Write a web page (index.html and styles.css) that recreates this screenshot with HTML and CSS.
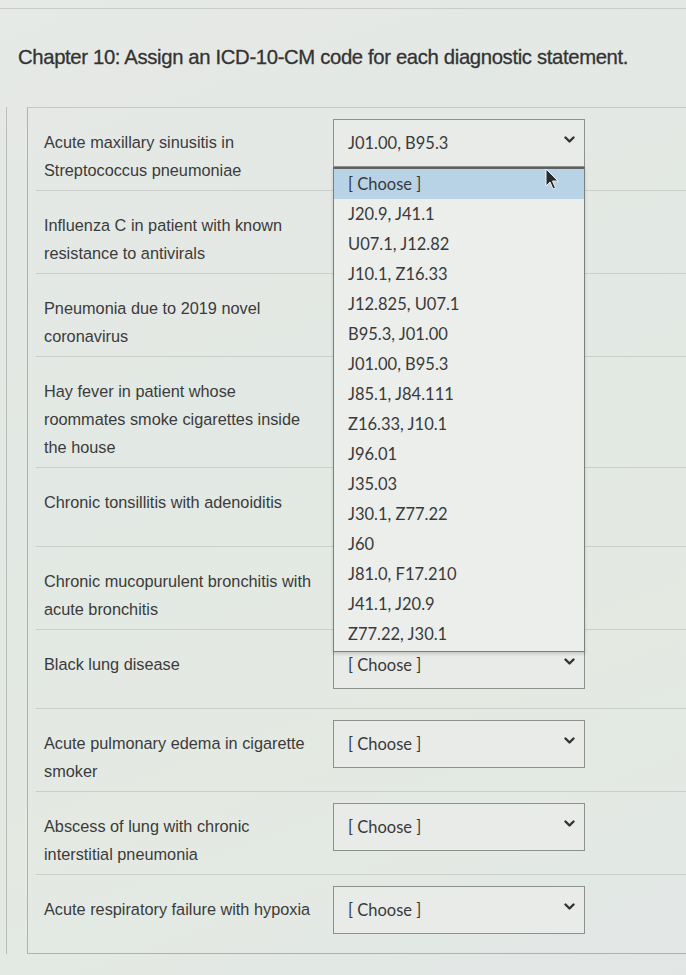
FILE: index.html
```html
<!DOCTYPE html>
<html lang="en">
<head>
<meta charset="utf-8">
<title>Chapter 10 quiz</title>
<link rel="stylesheet" href="styles.css">
</head>
<body>
<div class="topline"></div>
<h1 class="title">Chapter 10: Assign an ICD-10-CM code for each diagnostic statement.</h1>
<div class="frame">
  <div class="quiz">
    <div class="row">
      <div class="label">Acute maxillary sinusitis in Streptococcus pneumoniae</div>
      <div class="select-wrap">
        <div class="select open">
          <span>J01.00, B95.3</span>
          <svg class="chev" width="11" height="8" viewBox="0 0 11 8"><path d="M1.5 1.5 L5.5 5.5 L9.5 1.5" fill="none" stroke="#333" stroke-width="2.4" stroke-linecap="round" stroke-linejoin="round"/></svg>
        </div>
        <ul class="menu">
          <li class="hl">[ Choose ]</li>
          <li>J20.9, J41.1</li>
          <li>U07.1, J12.82</li>
          <li>J10.1, Z16.33</li>
          <li>J12.825, U07.1</li>
          <li>B95.3, J01.00</li>
          <li>J01.00, B95.3</li>
          <li>J85.1, J84.111</li>
          <li>Z16.33, J10.1</li>
          <li>J96.01</li>
          <li>J35.03</li>
          <li>J30.1, Z77.22</li>
          <li>J60</li>
          <li>J81.0, F17.210</li>
          <li>J41.1, J20.9</li>
          <li>Z77.22, J30.1</li>
        </ul>
        <svg class="cursor" width="15" height="23" viewBox="0 0 15 23"><path d="M1 1 L1 18 L5 14 L8 21 L10.5 20 L7.5 13 L13 13 Z" fill="#2a2a2a" stroke="#f2f2f2" stroke-width="1" stroke-linejoin="round"/></svg>
      </div>
    </div>
    <div class="row">
      <div class="label">Influenza C in patient with known resistance to antivirals</div>
      <div class="select"><span>[ Choose ]</span></div>
    </div>
    <div class="row">
      <div class="label">Pneumonia due to 2019 novel coronavirus</div>
      <div class="select"><span>[ Choose ]</span></div>
    </div>
    <div class="row">
      <div class="label">Hay fever in patient whose roommates smoke cigarettes inside the house</div>
      <div class="select"><span>[ Choose ]</span></div>
    </div>
    <div class="row">
      <div class="label">Chronic tonsillitis with adenoiditis</div>
      <div class="select"><span>[ Choose ]</span></div>
    </div>
    <div class="row">
      <div class="label">Chronic mucopurulent bronchitis with acute bronchitis</div>
      <div class="select"><span>[ Choose ]</span></div>
    </div>
    <div class="row">
      <div class="label">Black lung disease</div>
      <div class="select">
        <span>[ Choose ]</span>
        <svg class="chev" width="11" height="8" viewBox="0 0 11 8"><path d="M1.5 1.5 L5.5 5.5 L9.5 1.5" fill="none" stroke="#333" stroke-width="2.4" stroke-linecap="round" stroke-linejoin="round"/></svg>
      </div>
    </div>
    <div class="row">
      <div class="label">Acute pulmonary edema in cigarette smoker</div>
      <div class="select">
        <span>[ Choose ]</span>
        <svg class="chev" width="11" height="8" viewBox="0 0 11 8"><path d="M1.5 1.5 L5.5 5.5 L9.5 1.5" fill="none" stroke="#333" stroke-width="2.4" stroke-linecap="round" stroke-linejoin="round"/></svg>
      </div>
    </div>
    <div class="row">
      <div class="label">Abscess of lung with chronic interstitial pneumonia</div>
      <div class="select">
        <span>[ Choose ]</span>
        <svg class="chev" width="11" height="8" viewBox="0 0 11 8"><path d="M1.5 1.5 L5.5 5.5 L9.5 1.5" fill="none" stroke="#333" stroke-width="2.4" stroke-linecap="round" stroke-linejoin="round"/></svg>
      </div>
    </div>
    <div class="row last">
      <div class="label">Acute respiratory failure with hypoxia</div>
      <div class="select">
        <span>[ Choose ]</span>
        <svg class="chev" width="11" height="8" viewBox="0 0 11 8"><path d="M1.5 1.5 L5.5 5.5 L9.5 1.5" fill="none" stroke="#333" stroke-width="2.4" stroke-linecap="round" stroke-linejoin="round"/></svg>
      </div>
    </div>
  </div>
</div>
</body>
</html>
```

FILE: styles.css
```css
html, body {
  margin: 0;
  padding: 0;
}
body {
  width: 686px;
  height: 975px;
  overflow: hidden;
  background: linear-gradient(160deg, #e6e9e6 0%, #e2e8e3 45%, #e4eae2 70%, #e2e7e6 100%);
  font-family: "Liberation Sans", Arial, sans-serif;
  color: #3a3a3a;
}
.topline {
  height: 8px;
  border-bottom: 1px solid #c9ccc9;
}
.title {
  margin: 36px 0 0 18px;
  font-size: 20.3px;
  font-weight: normal;
  letter-spacing: -0.35px;
  color: #333;
  line-height: 25px;
  -webkit-text-stroke: 0.3px #333;
}
.frame {
  margin-top: 37px;
  margin-left: 6px;
  border-left: 1px solid #b9bdb9;
}
.quiz {
  margin-left: 20px;
  width: 760px;
  border-top: 1px solid #c3c7c3;
  border-left: 1px solid #aeb2ae;
  border-bottom: 1px solid #aeb2ae;
  padding-bottom: 0;
}
.row {
  display: flex;
  align-items: flex-start;
  margin-left: 8px;
  border-bottom: 1px solid #cbcfcb;
}
.row.last {
  border-bottom: none;
}
.label {
  width: 281px;
  box-sizing: border-box;
  padding: 20px 0 6px 8px;
  margin-right: 16px;
  font-size: 16.3px;
  line-height: 28px;
  color: #3b3b3b;
}
.select-wrap {
  position: relative;
}
.select {
  box-sizing: border-box;
  width: 252px;
  height: 48px;
  margin: 11px 0 19px 0;
  border: 1px solid #8d918d;
  background: #e8ebe8;
  display: flex;
  align-items: center;
  justify-content: space-between;
  padding: 0 9px 0 14px;
  font-family: Lato, "Liberation Sans", sans-serif;
  font-size: 16.5px;
  color: #3a3a3a;
}
.select .chev {
  margin-top: -6px;
}
.select.open {
  margin-bottom: 0;
}
.menu {
  position: absolute;
  top: 59px;
  left: 0;
  width: 252px;
  box-sizing: border-box;
  margin: 0;
  padding: 0 0 2px;
  list-style: none;
  background: #ebeeeb;
  border: 1px solid #7c807c;
  border-top: 2px solid #5f635f;
  box-shadow: 0 2px 3px rgba(0, 0, 0, 0.15);
  z-index: 5;
}
.menu li {
  height: 30px;
  line-height: 30px;
  padding-left: 14px;
  font-family: Lato, "Liberation Sans", sans-serif;
  font-size: 16.5px;
  color: #3a3a3a;
}
.menu li.hl {
  background: #b8d3e5;
}
.cursor {
  position: absolute;
  top: 60px;
  left: 212px;
  z-index: 6;
}
```
